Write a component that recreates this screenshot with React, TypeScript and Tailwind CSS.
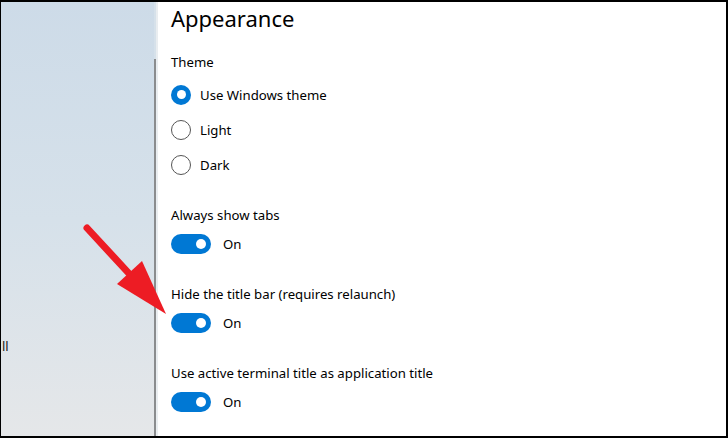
import React from "react";

const font = { fontFamily: '"Noto Sans", "Open Sans", Arial, sans-serif' };

function Radio({ checked, label }: { checked?: boolean; label: string }) {
  return (
    <div className="flex h-[35px] items-center">
      {checked ? (
        <div className="flex h-[20px] w-[20px] items-center justify-center rounded-full bg-[#0078d4]">
          <div className="h-[9px] w-[9px] rounded-full bg-white" />
        </div>
      ) : (
        <div className="h-[20px] w-[20px] rounded-full border border-[#555]" />
      )}
      <span className="ml-[9px] text-[13.2px] leading-[20px] text-black">{label}</span>
    </div>
  );
}

function Toggle() {
  return (
    <div className="flex h-[20px] items-center">
      <div className="flex h-[20px] w-[40px] items-center justify-end rounded-full bg-[#0078d4] pr-[5px]">
        <div className="h-[10px] w-[10px] rounded-full bg-white" />
      </div>
      <span className="ml-[12px] text-[13.2px] leading-[20px] text-black">On</span>
    </div>
  );
}

export default function App() {
  return (
    <div
      className="relative flex h-[438px] w-[728px] overflow-hidden border-t-2 border-r-2 border-b-2 border-l border-black bg-white"
      style={font}
    >
      <div className="w-[153px] bg-gradient-to-b from-[#cddbe8] via-[#d6e1ea] to-[#e5e7e9] pt-[331px]">
        <span className="ml-[1px] text-[13px] leading-[14px] text-[#222]">ll</span>
      </div>
      <div className="flex w-[2px] flex-col bg-[#d6e1ea]">
        <div className="mt-[57px] flex-1 bg-[#8a8c8e]" />
      </div>
      <div className="w-[2px] bg-[#e9edf0]" />
      <div className="flex flex-1 flex-col pl-[13px]">
        <div className="text-[22px] leading-[32px] text-black">Appearance</div>
        <div className="mt-[18px] text-[13.2px] leading-[20px] text-black">Theme</div>
        <div className="mt-[5px] flex flex-col">
          <Radio checked label="Use Windows theme" />
          <Radio label="Light" />
          <Radio label="Dark" />
        </div>
        <div className="mt-[23px] text-[13.2px] leading-[20px] text-black">Always show tabs</div>
        <div className="mt-[9px]">
          <Toggle />
        </div>
        <div className="mt-[30px] text-[13.2px] leading-[20px] text-black">Hide the title bar (requires relaunch)</div>
        <div className="mt-[9px]">
          <Toggle />
        </div>
        <div className="mt-[30px] text-[13.2px] leading-[20px] text-black">
          Use active terminal title as application title
        </div>
        <div className="mt-[9px]">
          <Toggle />
        </div>
      </div>
      <svg
        className="pointer-events-none absolute left-0 top-0"
        width="728"
        height="438"
        viewBox="0 0 728 438"
      >
        <line x1="86" y1="226" x2="134" y2="278" stroke="#ed1c24" strokeWidth="7" strokeLinecap="round" />
        <polygon points="116,282 141,259 165,312" fill="#ed1c24" />
      </svg>
    </div>
  );
}
